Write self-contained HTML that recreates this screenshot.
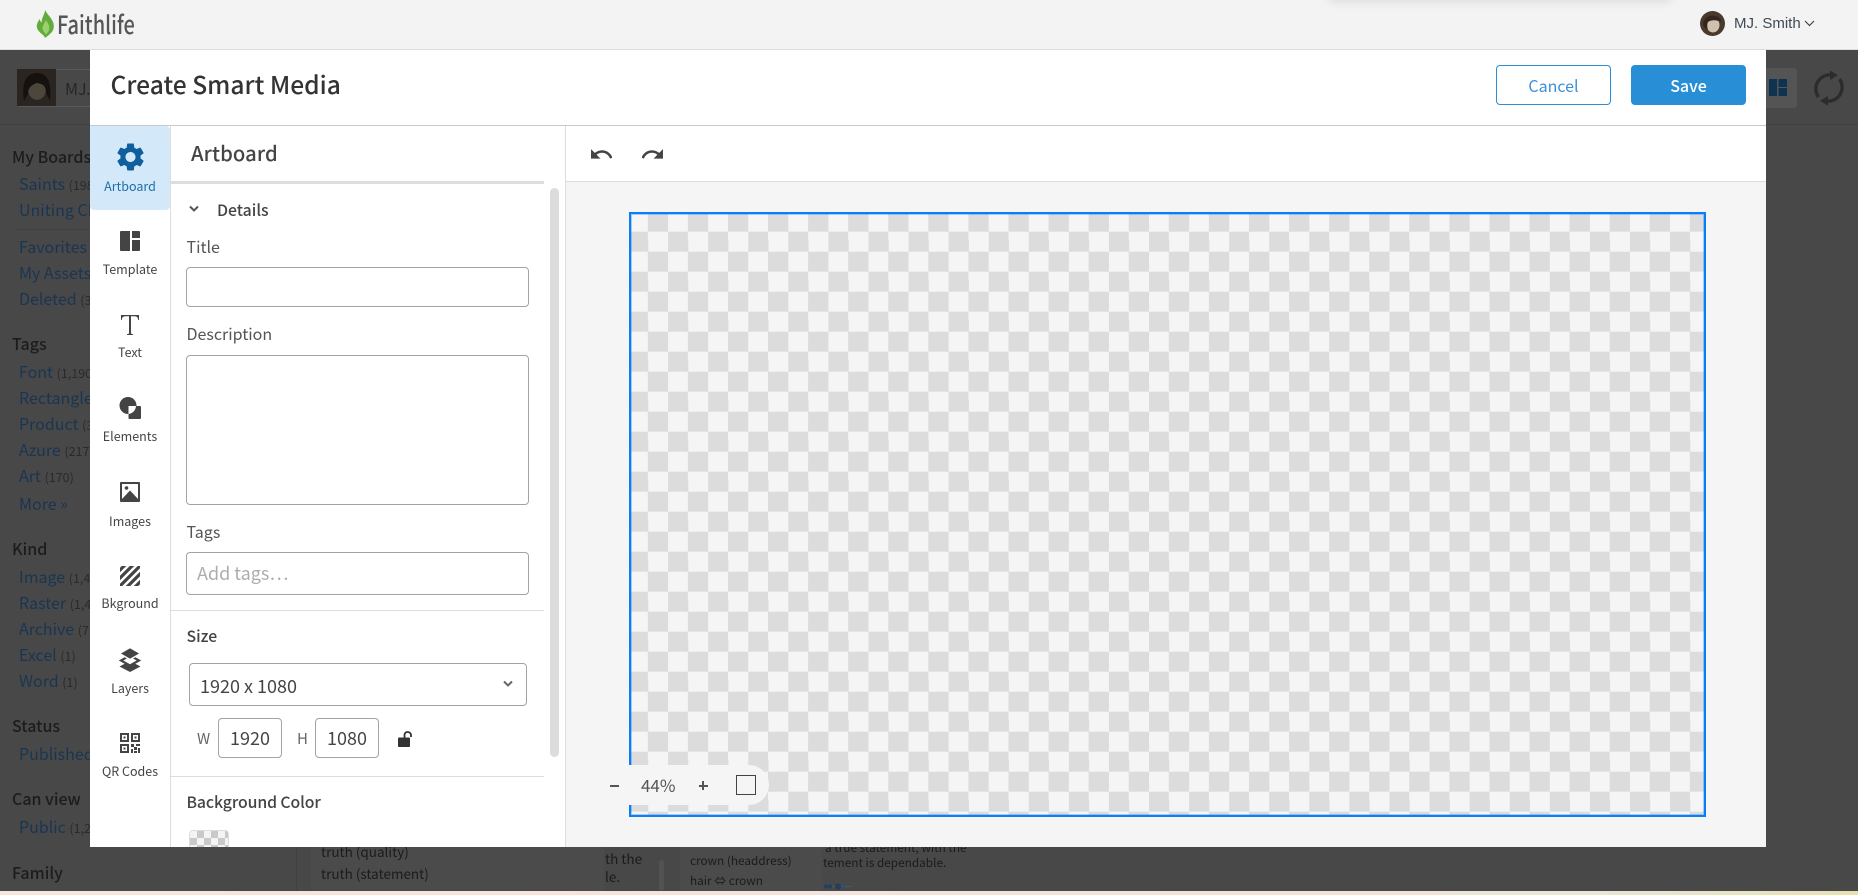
<!DOCTYPE html>
<html lang="en"><head><meta charset="utf-8"><title>Create Smart Media</title>
<style>
html,body{margin:0;padding:0;width:1858px;height:895px;overflow:hidden;background:#484848}
*{box-sizing:border-box}
body{position:relative;font-family:"Noto Sans CJK SC","Liberation Sans",sans-serif;color:#444}
.a{position:absolute}
.t{position:absolute;white-space:nowrap;line-height:20px}
.l{color:#1a3552;font-size:16px;left:19px;margin-top:-1px}
.l span{color:#2a2a2a;font-size:12.5px}
.h{color:#1c1c1c;font-size:16px;left:12px;font-weight:500;margin-top:-1px}
.r{left:90px;width:80px;text-align:center;font-size:12.5px;color:#444}
.b{color:#1b1b1b;font-size:13.5px}
.c{color:#1b1b1b;font-size:11.8px}
.f{position:absolute;background:#fff;border:1px solid #a3a3a3;border-radius:4px}
.lab{left:186.5px;font-size:16px;color:#555}
.lb2{left:186.5px;font-size:15.8px;color:#444;font-weight:500}
.d{position:absolute;background:#ddd}
svg{position:absolute;display:block}
</style></head><body>

<!-- background page -->
<div class="a" style="left:0;top:0;width:1858px;height:50px;background:#f3f3f3;border-bottom:1px solid #ddd"></div>
<div class="a" style="left:1325px;top:-12px;width:350px;height:12px;box-shadow:0 2px 10px rgba(0,0,0,.1);border-radius:0 0 30px 30px"></div>
<svg style="left:36px;top:10px" width="19" height="28" viewBox="0 0 19 28"><path d="M9.500 0C10.500 4 15 7 17 12c1.500 4 1 8-2 11-1.500 1.500-3.500 3-6 5-.5-1.500-1-2.300-2.500-3.500C3.500 22 1 20 .8 16.500.6 13.500 2.500 11 3.500 9c.5 1.500 1 2.500 2 3.500C5.800 8 8 5 9.500 0z" fill="#62ac3c"/><path d="M9.800 10c1.500 2.500 3.500 4.500 3.500 8 0 2.500-1.500 4.500-3.500 6.500-1-2-3-3.500-3.300-6C6.300 15.500 9 13 9.800 10z" fill="#9fd06f"/></svg>
<div class="t" style="left:57px;top:14px;font-size:25px;color:#565656;font-weight:500;transform:scaleX(.8);transform-origin:0 50%">Faithlife</div>
<svg style="left:1700px;top:11px" width="25" height="25" viewBox="0 0 25 25"><circle cx="12.500" cy="12.500" r="12.500" fill="#4a3a2e"/><ellipse cx="13" cy="14" rx="6.500" ry="7.500" fill="#cfc1ae"/><path d="M3 12C5 5 12 3 18 6c2 1 3 3 3 5-4-2-9-2.500-13 0-1 2-1 5 0 8-3-1-5-4-5-7z" fill="#33261c"/></svg>
<div class="t" style="left:1734px;top:14px;font-family:'Liberation Sans',sans-serif;font-size:15px;color:#3f4a55">MJ. Smith</div>
<svg style="left:1804px;top:20px" width="11" height="7" viewBox="0 0 11 7"><path d="M1 1l4.500 4.500L10 1" fill="none" stroke="#444" stroke-width="1.200"/></svg>

<div class="a" style="left:0;top:50px;width:1858px;height:841px;background:#484848"></div>
<div class="d" style="left:0;top:124px;width:90px;height:1px;background:#404040"></div>
<div class="d" style="left:1766px;top:124px;width:92px;height:1px;background:#404040"></div>
<div class="a" style="left:17px;top:69px;width:80px;height:38px;border:1px solid #5a5a5a;border-radius:3px"></div>
<svg style="left:17px;top:69px" width="39" height="37" viewBox="0 0 39 37"><rect width="39" height="37" fill="#2a2520"/><ellipse cx="20" cy="20" rx="9" ry="11" fill="#4c463b"/><path d="M7 32C4 12 10 4 20 4s15 8 13 28l-4-8c0-6-2-9-9-10-6 2-9 5-9 11z" fill="#15110e"/></svg>
<div class="t" style="left:65px;top:78px;font-size:16px;color:#262626">MJ.</div>

<div class="t h" style="top:147px">My Boards</div>
<div class="t l" style="top:174px">Saints <span>(198</span></div>
<div class="t l" style="top:200px">Uniting Ch</div>
<div class="d" style="left:17px;top:229px;width:73px;height:1px;background:#404040"></div>
<div class="t l" style="top:237px">Favorites</div>
<div class="t l" style="top:263px">My Assets</div>
<div class="t l" style="top:289px">Deleted <span>(3</span></div>
<div class="t h" style="top:334px">Tags</div>
<div class="t l" style="top:362px">Font <span>(1,190</span></div>
<div class="t l" style="top:388px">Rectangle</div>
<div class="t l" style="top:414px">Product <span>(3</span></div>
<div class="t l" style="top:440px">Azure <span>(217</span></div>
<div class="t l" style="top:466px">Art <span>(170)</span></div>
<div class="t l" style="top:494px">More »</div>
<div class="t h" style="top:539px">Kind</div>
<div class="t l" style="top:567px">Image <span>(1,4</span></div>
<div class="t l" style="top:593px">Raster <span>(1,4</span></div>
<div class="t l" style="top:619px">Archive <span>(7</span></div>
<div class="t l" style="top:645px">Excel <span>(1)</span></div>
<div class="t l" style="top:671px">Word <span>(1)</span></div>
<div class="t h" style="top:716px">Status</div>
<div class="t l" style="top:744px">Published</div>
<div class="t h" style="top:789px">Can view</div>
<div class="t l" style="top:817px">Public <span>(1,2</span></div>
<div class="t h" style="top:863px">Family</div>

<div class="a" style="left:1766px;top:68px;width:31px;height:40px;background:#545454;border-radius:0 3px 3px 0"></div>
<svg style="left:1769px;top:79px" width="18" height="17" viewBox="0 0 18 17"><path d="M0 0h8v17H0zM9.500 0H18v8H9.500zM9.500 9H18v8H9.500z" fill="#0e3350"/></svg>
<svg style="left:1812px;top:69px" width="34" height="38" viewBox="0 0 34 38"><path d="M20 6A14 14 0 0 0 6.500 28M14 32A14 14 0 0 0 27.500 10" fill="none" stroke="#2c2c2c" stroke-width="3.400"/><path d="M18 1.500l8 4.800-8 4.800zM16 27l-8 4.800 8 4.800z" fill="#2c2c2c"/></svg>

<!-- cards under the modal -->
<div class="a" style="left:296px;top:847px;width:1px;height:44px;background:#424242"></div>
<div class="a" style="left:311px;top:847px;width:293px;height:44px;background:#4b4b4b"></div>
<div class="a" style="left:680px;top:847px;width:142px;height:44px;background:#4b4b4b"></div>
<div class="t b" style="left:321px;top:841px;height:20px">truth (quality)</div>
<div class="t b" style="left:321px;top:863px">truth (statement)</div>
<div class="t b" style="left:605px;top:848px">th the</div>
<div class="t b" style="left:605px;top:866px">le.</div>
<div class="a" style="left:659px;top:860px;width:5px;height:31px;background:#525252;border-radius:3px"></div>
<div class="t c" style="left:690px;top:851px">crown (headdress)</div>
<div class="t c" style="left:690px;top:871px">hair ⇔ crown</div>
<div class="t c" style="left:825px;top:838px">a true statement, with the</div>
<div class="t c" style="left:823px;top:853px">tement is dependable.</div>
<svg style="left:823px;top:882px" width="30" height="9" viewBox="0 0 30 9"><path d="M0 4.500h28" stroke="#555" stroke-width="1"/><circle cx="3" cy="4.500" r="2" fill="#1f3f63"/><circle cx="7" cy="4.500" r="2" fill="#1f3f63"/><circle cx="15" cy="4.500" r="3" fill="#1f3f63"/><circle cx="21" cy="4.500" r="2" fill="#34506f"/></svg>
<div class="a" style="left:0;top:891px;width:1858px;height:4px;background:linear-gradient(90deg,#f7e6e0 0%,#f5e4dc 40%,#ece4d8 85%,#e6e2b4 100%)"></div>

<!-- modal -->
<div class="a" style="left:90px;top:50px;width:1676px;height:797px;background:#fff;overflow:hidden">
  <div class="a" style="left:0;top:75px;width:1676px;height:1px;background:#c9c9c9"></div>
  <div class="a" style="left:475px;top:76px;width:1201px;height:721px;background:#f5f5f5;border-left:1px solid #ddd"></div>
  <div class="a" style="left:476px;top:76px;width:1200px;height:56px;background:#fff;border-bottom:1px solid #ddd"></div>
  <div class="a" style="left:80px;top:76px;width:1px;height:721px;background:#ddd"></div>
  <div class="a" style="left:0;top:76px;width:80px;height:84px;background:#d3e9fa;border-radius:0 4px 4px 4px"></div>
</div>

<div class="t" style="left:110.5px;top:69px;line-height:30px;font-size:24.6px;color:#333;font-weight:500">Create Smart Media</div>
<div class="a" style="left:1496px;top:65px;width:115px;height:40px;border:1px solid #2a8ed6;border-radius:4px;background:#fff;text-align:center;line-height:38px;font-size:16px;color:#3f8fd8">Cancel</div>
<div class="a" style="left:1631px;top:65px;width:115px;height:40px;border-radius:4px;background:#288ed6;text-align:center;line-height:40px;font-size:16px;color:#fff;font-weight:500">Save</div>

<!-- rail -->
<svg style="left:116.500px;top:142.500px" width="27" height="28" viewBox="2.500 2 19 20"><path fill="#0f5f9e" d="M19.140 12.940c.04-.3.06-.61.06-.94 0-.32-.02-.64-.07-.94l2.030-1.580c.18-.14.23-.41.12-.61l-1.920-3.320c-.12-.22-.37-.29-.59-.22l-2.390.96c-.5-.38-1.030-.7-1.620-.94l-.36-2.540c-.04-.24-.24-.41-.48-.41h-3.840c-.24 0-.43.17-.47.41l-.36 2.540c-.59.24-1.130.57-1.620.94l-2.390-.96c-.22-.08-.47 0-.59.22L2.740 8.870c-.12.21-.08.47.12.61l2.030 1.580c-.05.3-.09.63-.09.94s.02.64.07.94l-2.030 1.580c-.18.14-.23.41-.12.61l1.920 3.320c.12.22.37.29.59.22l2.390-.96c.5.38 1.030.7 1.620.94l.36 2.540c.05.24.24.41.48.41h3.840c.24 0 .44-.17.47-.41l.36-2.540c.59-.24 1.130-.56 1.620-.94l2.390.96c.22.08.47 0 .59-.22l1.920-3.320c.12-.22.07-.47-.12-.61l-2.010-1.580zM12 15.600c-1.980 0-3.600-1.620-3.600-3.600s1.620-3.600 3.600-3.600 3.600 1.620 3.600 3.600-1.620 3.600-3.600 3.600z"/></svg>
<div class="t r" style="top:176px;color:#1f6ea6">Artboard</div>
<svg style="left:120px;top:231px" width="20" height="20" viewBox="0 0 20 20"><path fill="#444" d="M1 0h9v20H1a1 1 0 0 1-1-1V1a1 1 0 0 1 1-1zM12 0h7a1 1 0 0 1 1 1v6h-8zM12 9h8v10a1 1 0 0 1-1 1h-7z"/></svg>
<div class="t r" style="top:258.500px">Template</div>
<svg style="left:121px;top:315px" width="18" height="20" viewBox="0 0 18 20"><path fill="#444" d="M0 0h18v5h-.8c-.3-2.300-1-3.700-3.700-3.700H10V18c0 .8.4 1 2 1.100v.9H6v-.9c1.600-.1 2-.3 2-1.100V1.300H4.500C1.800 1.300 1.100 2.700.8 5H0z"/></svg>
<div class="t r" style="top:342px">Text</div>
<svg style="left:119px;top:397px" width="22" height="22" viewBox="0 0 22 22"><circle cx="9" cy="8.500" r="8.500" fill="#444"/><path fill="#444" d="M9.500 9H21a1 1 0 0 1 1 1v11a1 1 0 0 1-1 1H10.500a1 1 0 0 1-1-1z"/><path fill="#fff" d="M9.500 9h7.500a8.500 8.500 0 0 1-7.500 8z"/></svg>
<div class="t r" style="top:426px">Elements</div>
<svg style="left:120px;top:482px" width="20" height="20" viewBox="0 0 20 20"><path fill="#444" d="M1 0h18a1 1 0 0 1 1 1v18a1 1 0 0 1-1 1H1a1 1 0 0 1-1-1V1a1 1 0 0 1 1-1z"/><rect x="2" y="2" width="16" height="15" fill="#fff"/><circle cx="6.500" cy="6" r="1.800" fill="#444"/><path fill="#444" d="M1.500 17.500L10 8.500l8.500 9z"/></svg>
<div class="t r" style="top:511px">Images</div>
<svg style="left:120px;top:566px" width="20" height="20" viewBox="0 0 20 20"><defs><clipPath id="cb"><rect width="20" height="20"/></clipPath></defs><g clip-path="url(#cb)" stroke="#444" stroke-width="3.200"><path d="M-2 6L6-2M-2 14L14-2M-2 22L22-2M6 22L22 6M14 22L22 14"/></g></svg>
<div class="t r" style="top:593px">Bkground</div>
<svg style="left:119px;top:648px" width="22" height="24" viewBox="0 0 22 24"><path fill="#444" d="M11 13L.5 18.500 11 24l10.500-5.500z"/><path fill="#fff" stroke="#444" stroke-width="2.200" d="M11 7.500L2 12.500 11 17.500l9-5z"/><path fill="#444" stroke="#fff" stroke-width="1.400" d="M11-.5L.5 5.500 11 11.500l10.500-6z"/></svg>
<div class="t r" style="top:677.500px">Layers</div>
<svg style="left:120px;top:733px" width="20" height="20" viewBox="0 0 20 20"><g fill="#444"><path fill-rule="evenodd" d="M0 0h9v9H0zM2 2v5h5V2zM11 0h9v9h-9zM13 2v5h5V2zM0 11h9v9H0zM2 13v5h5v-5z"/><rect x="3.500" y="3.500" width="2" height="2"/><rect x="14.500" y="3.500" width="2" height="2"/><rect x="3.500" y="14.500" width="2" height="2"/><rect x="11" y="11" width="3" height="3"/><rect x="16" y="11" width="4" height="2"/><rect x="14" y="14" width="3" height="3"/><rect x="11" y="16" width="2" height="4"/><rect x="18" y="15" width="2" height="5"/><rect x="14" y="18" width="3" height="2"/></g></svg>
<div class="t r" style="top:761px">QR Codes</div>

<!-- panel -->
<div class="t" style="left:191px;top:143px;font-size:20.200px;color:#444;font-weight:500;letter-spacing:.1px">Artboard</div>
<div class="d" style="left:171px;top:181px;width:373px;height:3px"></div>
<div class="a" style="left:550px;top:188px;width:9px;height:569px;background:#dcdcdc;border-radius:5px"></div>
<svg style="left:189px;top:205px" width="10" height="8" viewBox="0 0 10 8"><path d="M1 1.500L5 5.500l4-4" fill="none" stroke="#555" stroke-width="2"/></svg>
<div class="t" style="left:217px;top:199.500px;font-size:15.800px;color:#444;font-weight:500">Details</div>
<div class="t lab" style="top:236px">Title</div>
<div class="f" style="left:186px;top:267px;width:343px;height:40px"></div>
<div class="t lab" style="top:323px">Description</div>
<div class="f" style="left:186px;top:355px;width:343px;height:150px"></div>
<div class="t lab" style="top:521px">Tags</div>
<div class="f" style="left:186px;top:552px;width:343px;height:43px"></div>
<div class="t" style="left:197px;top:563px;font-size:18px;color:#adadad">Add tags…</div>
<div class="d" style="left:171px;top:610px;width:373px;height:1px"></div>
<div class="t lb2" style="top:625.500px">Size</div>
<div class="f" style="left:189px;top:663px;width:338px;height:43px"></div>
<div class="t" style="left:200px;top:676px;font-size:18px;color:#444">1920 x 1080</div>
<svg style="left:503px;top:680px" width="10" height="8" viewBox="0 0 10 8"><path d="M1 1.500L5 5.500l4-4" fill="none" stroke="#666" stroke-width="2"/></svg>
<div class="t" style="left:197px;top:729px;font-size:15px;color:#666">W</div>
<div class="f" style="left:218px;top:718px;width:64px;height:40px;text-align:center;font-size:18px;line-height:38px;color:#444">1920</div>
<div class="t" style="left:297px;top:729px;font-size:15px;color:#666">H</div>
<div class="f" style="left:315px;top:718px;width:64px;height:40px;text-align:center;font-size:18px;line-height:38px;color:#444">1080</div>
<svg style="left:398px;top:731px" width="16" height="16" viewBox="0 0 16 16"><path fill="#333" d="M1 6.500h10a1 1 0 0 1 1 1V15a1 1 0 0 1-1 1H1a1 1 0 0 1-1-1V7.500a1 1 0 0 1 1-1z"/><path fill="none" stroke="#333" stroke-width="1.800" d="M6.500 7V4c0-1.800 1.200-3 3-3s3.500 1.200 3.500 3v2"/></svg>
<div class="d" style="left:171px;top:776px;width:373px;height:1px"></div>
<div class="t lb2" style="top:791.500px;letter-spacing:-.1px">Background Color</div>
<div class="a" style="left:189px;top:830px;width:40px;height:17px;overflow:hidden;border-radius:4px 4px 0 0;border:1px solid #ddd;border-bottom:0;background-color:#f4f4f4;background-image:conic-gradient(#c9c9c9 25%,transparent 0 50%,#c9c9c9 0 75%,transparent 0);background-size:14px 14px"></div>

<!-- toolbar -->
<svg style="left:591px;top:145.500px" width="21" height="17.500" viewBox="2 4 20 16.700"><path fill="#444" d="M12.500 8c-2.650 0-5.050.99-6.900 2.600L2 7v9h9l-3.620-3.620c1.390-1.160 3.160-1.880 5.120-1.880 3.540 0 6.550 2.310 7.600 5.500l2.370-.78C21.080 11.030 17.150 8 12.500 8z"/></svg>
<svg style="left:642px;top:145.500px" width="21" height="17.500" viewBox="2 4 20 16.700"><path fill="#444" d="M18.400 10.600C16.550 8.990 14.150 8 11.500 8c-4.650 0-8.580 3.030-9.960 7.220L3.900 16c1.050-3.190 4.050-5.500 7.600-5.500 1.950 0 3.730.72 5.120 1.880L13 16h9V7l-3.600 3.600z"/></svg>

<!-- artboard -->
<div class="a" style="left:629px;top:212px;width:1077px;height:605px;border:2px solid #0a7df8;box-shadow:inset 0 0 0 1px rgba(10,125,248,.35);background-color:#f5f5f5;background-origin:border-box;background-clip:padding-box;background-image:conic-gradient(#dcdcdc 25%,#f5f5f5 0 50%,#dcdcdc 0 75%,#f5f5f5 0);background-size:40.080px 40px;background-position:-1px -0.300px"></div>

<!-- zoom control -->
<div class="a" style="left:600px;top:765px;width:169px;height:40px;background:#f5f5f5;border-radius:0 20px 20px 0"></div>
<div class="a" style="left:610px;top:785px;width:9px;height:1.500px;background:#555"></div>
<div class="t" style="left:641px;top:775px;font-size:17px;color:#555">44%</div>
<div class="a" style="left:698.500px;top:785px;width:9px;height:1.500px;background:#555"></div>
<div class="a" style="left:702.300px;top:780.500px;width:1.500px;height:9.500px;background:#555"></div>
<div class="a" style="left:736px;top:775px;width:20px;height:20px;border:1.500px solid #444"></div>
</body></html>
